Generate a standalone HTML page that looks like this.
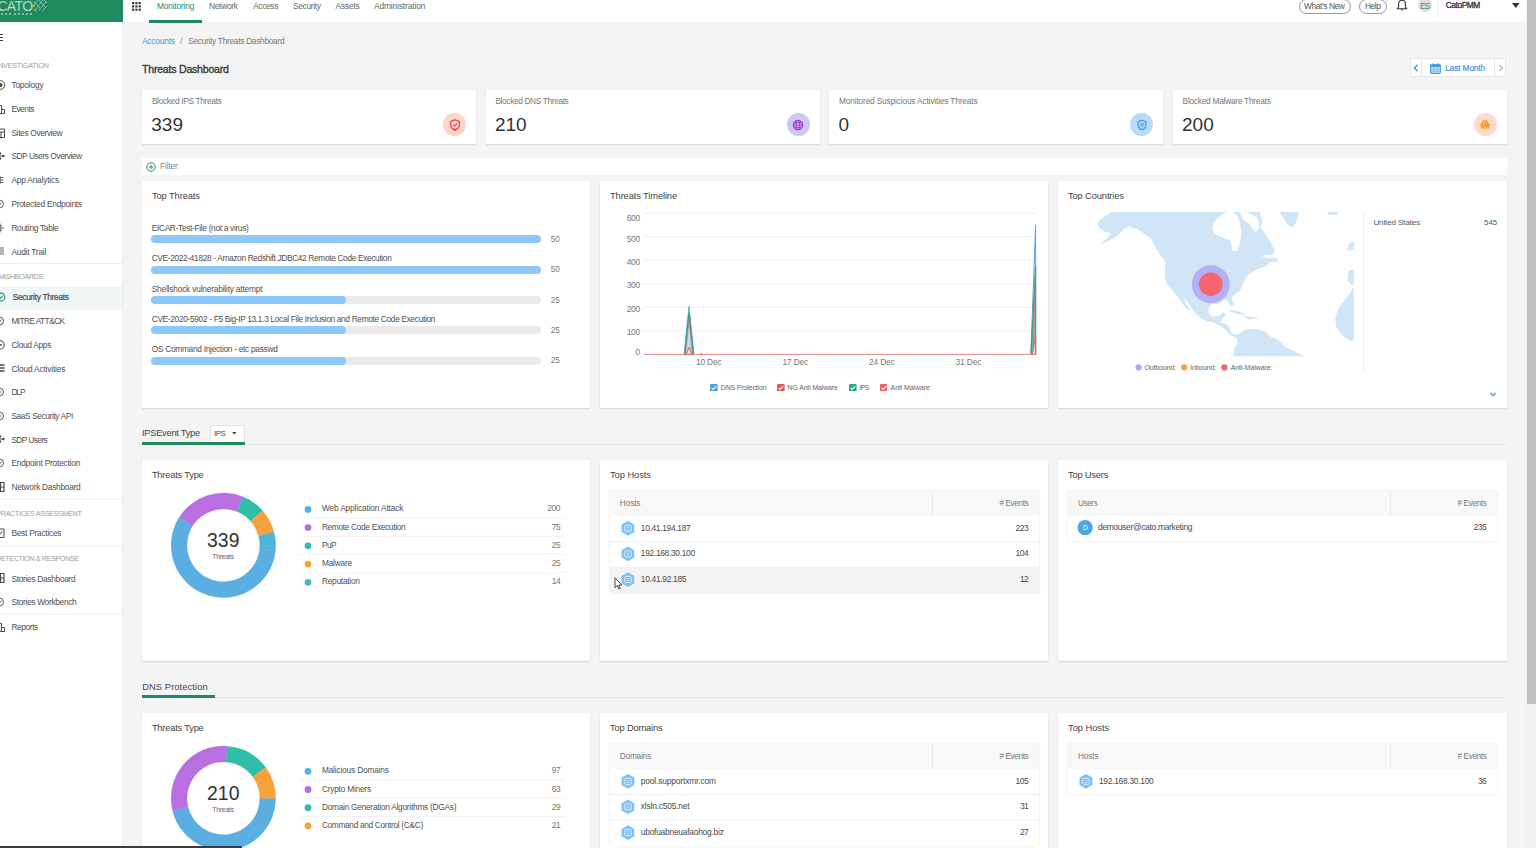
<!DOCTYPE html>
<html lang="en">
<head>
<meta charset="utf-8">
<title>Security Threats Dashboard</title>
<style>
*{box-sizing:border-box;margin:0;padding:0}
html,body{width:1536px;height:848px;overflow:hidden}
body{font-family:"Liberation Sans",sans-serif;background:#f4f4f4;position:relative;color:#555;font-size:9px}
.a{position:absolute;white-space:nowrap}
/* header */
#hdr{left:0;top:0;width:1526px;height:22px;background:#fff}
#logo{left:0;top:0;width:122.5px;height:22px;background:#1f8a5e;overflow:hidden}
.nav{top:0;height:12px;line-height:12px;font-size:8.4px;color:#6b6b6b;letter-spacing:-.025em}
/* sidebar */
#side{left:0;top:22px;width:123px;height:826px;background:#fff;border-right:1px solid #ececec}
.sh{left:-2px;font-size:6.7px;color:#a9a9a9;letter-spacing:-.01em;height:10px;line-height:10px}
.si{left:11.5px;font-size:8.4px;color:#4f4f4f;height:12px;line-height:12px;letter-spacing:-.025em}
.sep{left:0;width:122px;height:1px;background:#efefef}
.ic{left:-4px;width:11px;height:11px}
/* cards */
.card{background:#fff;box-shadow:0 1px 2px rgba(0,0,0,.14);border-radius:1px}
.ct{font-size:8px;letter-spacing:-.025em;color:#777;height:10px;line-height:10px}
.cn{font-size:19px;color:#333;height:20px;line-height:20px}
.pt{font-size:9.3px;letter-spacing:-.02em;color:#444;height:12px;line-height:12px}
.t8{font-size:8.2px;color:#555;height:10px;line-height:10px}
.r{text-align:right}
</style>
</head>
<body>
<!-- HEADER -->
<div id="hdr" class="a"></div>
<div id="logo" class="a"></div>
<div class="a" style="left:-2.6px;top:-2.2px;font-size:14px;line-height:17px;color:#eef7f3;letter-spacing:-.65px;-webkit-text-stroke:.35px #1f8a5e">CATO</div>
<svg class="a" style="left:32px;top:-3px" width="16" height="16" viewBox="0 0 16 16"><g stroke="#bfe0d1" stroke-width=".6" fill="none"><path d="M1 9 L7 2 M3 13 L11 3 M6 14 L14 5 M10 14 L15 9 M2 4 L8 11 M5 1 L13 10 M9 0 L15 6 M1 12 L5 15 M12 1 L15 3"/></g><circle cx="1.6" cy="9" r="1.2" fill="#f2a23a"/></svg>
<div class="a" style="left:1px;top:13.1px;width:31px;height:1.7px;background:repeating-linear-gradient(90deg,#7cc3a6 0 2px,transparent 2px 4.2px)"></div>
<svg class="a" style="left:131.5px;top:1.5px" width="9" height="9" viewBox="0 0 9 9"><g fill="#3a3a3a"><rect x="0.0" y="0.0" width="2.2" height="2.2"/><rect x="3.3" y="0.0" width="2.2" height="2.2"/><rect x="6.6" y="0.0" width="2.2" height="2.2"/><rect x="0.0" y="3.3" width="2.2" height="2.2"/><rect x="3.3" y="3.3" width="2.2" height="2.2"/><rect x="6.6" y="3.3" width="2.2" height="2.2"/><rect x="0.0" y="6.6" width="2.2" height="2.2"/><rect x="3.3" y="6.6" width="2.2" height="2.2"/><rect x="6.6" y="6.6" width="2.2" height="2.2"/></g></svg>
<div class="a" style="left:157.0px;top:-0.2px;height:12px;line-height:12px;font-size:8.4px;letter-spacing:-0.202px;color:#2d8a73;">Monitoring</div>
<div class="a" style="left:209.0px;top:-0.2px;height:12px;line-height:12px;font-size:8.4px;letter-spacing:-0.301px;color:#666;">Network</div>
<div class="a" style="left:253.0px;top:-0.2px;height:12px;line-height:12px;font-size:8.4px;letter-spacing:-0.315px;color:#666;">Access</div>
<div class="a" style="left:293.0px;top:-0.2px;height:12px;line-height:12px;font-size:8.4px;letter-spacing:-0.335px;color:#666;">Security</div>
<div class="a" style="left:335.6px;top:-0.2px;height:12px;line-height:12px;font-size:8.4px;letter-spacing:-0.202px;color:#666;">Assets</div>
<div class="a" style="left:374.0px;top:-0.2px;height:12px;line-height:12px;font-size:8.4px;letter-spacing:-0.132px;color:#666;">Administration</div>
<div class="a" style="left:149px;top:20px;width:53px;height:2.5px;background:#1f8a5e"></div>
<div class="a" style="left:1298.5px;width:52px;border:1px solid #979797;border-radius:8px;height:15px;top:-1.5px"></div>
<div class="a" style="left:1359px;width:27.5px;border:1px solid #979797;border-radius:8px;height:15px;top:-1.5px"></div>
<div class="a" style="left:1304.0px;top:-0.4px;height:12px;line-height:12px;font-size:8.4px;letter-spacing:-0.394px;color:#555;">What's New</div>
<div class="a" style="left:1365.0px;top:-0.4px;height:12px;line-height:12px;font-size:8.4px;letter-spacing:-0.425px;color:#555;">Help</div>
<svg class="a" style="left:1396px;top:-1px" width="12" height="13" viewBox="0 0 12 13"><path d="M6 1.2 C3.6 1.2 2.6 3 2.6 5.2 V8 L1.2 9.8 H10.8 L9.4 8 V5.2 C9.4 3 8.4 1.2 6 1.2 Z" fill="none" stroke="#333" stroke-width="1.1" stroke-linejoin="round"/><path d="M4.9 10.6 a1.1 1.1 0 0 0 2.2 0 Z" fill="#333"/><rect x="5.4" y="0" width="1.2" height="1.4" fill="#333"/></svg>
<div class="a" style="left:1418px;top:-2.5px;width:14px;height:14px;border-radius:7px;background:#dedede"></div>
<div class="a" style="left:1419.9px;top:-0.3px;height:12px;line-height:12px;font-size:8.3px;letter-spacing:-0.672px;color:#2d9a78;">ES</div>
<div class="a" style="left:1437px;top:0;width:1px;height:17px;background:#ececec"></div>
<div class="a" style="left:1445.7px;top:-0.6px;height:12px;line-height:12px;font-size:8.4px;letter-spacing:-0.432px;color:#333;-webkit-text-stroke:.3px #333;">CatoPMM</div>
<svg class="a" style="left:1511.5px;top:3.2px" width="7.5" height="5" viewBox="0 0 7.5 5"><path d="M0 0 H7.5 L3.75 5 Z" fill="#333"/></svg>

<!-- SIDEBAR -->
<div id="side" class="a">
<div class="a" style="left:-3.7px;top:38.7px;height:10px;line-height:10px;font-size:7.1px;letter-spacing:-0.151px;color:#9c9c9c;">INVESTIGATION</div>
<svg class="a" style="left:-6px;top:57.0px" width="12" height="12" viewBox="0 0 12 12" fill="none" stroke="#4a4a4a" stroke-width="1"><circle cx="6.5" cy="6" r="4.3"/><circle cx="6.5" cy="6" r="2" fill="#4a4a4a" stroke="none"/></svg>
<div class="a" style="left:11.4px;top:57.2px;height:12px;line-height:12px;font-size:8.35px;letter-spacing:-0.175px;color:#4f4f4f;">Topology</div>
<svg class="a" style="left:-6px;top:80.7px" width="12" height="12" viewBox="0 0 12 12" fill="none" stroke="#4a4a4a" stroke-width="1"><path d="M2 2.5 H7.5 V10.5 H2 Z M7.5 6.5 H10.5 V10.5 H7.5"/></svg>
<div class="a" style="left:11.4px;top:80.9px;height:12px;line-height:12px;font-size:8.35px;letter-spacing:-0.505px;color:#4f4f4f;">Events</div>
<svg class="a" style="left:-6px;top:104.8px" width="12" height="12" viewBox="0 0 12 12" fill="none" stroke="#4a4a4a" stroke-width="1"><path d="M1.5 2 H10.5 V10.5 H1.5 Z M1.5 5 H10.5 M7 5 V10.5"/></svg>
<div class="a" style="left:11.4px;top:105.0px;height:12px;line-height:12px;font-size:8.35px;letter-spacing:-0.337px;color:#4f4f4f;">Sites Overview</div>
<svg class="a" style="left:-6px;top:128.1px" width="12" height="12" viewBox="0 0 12 12" fill="none" stroke="#4a4a4a" stroke-width="1"><g fill="#4a4a4a" stroke="none"><circle cx="6" cy="3.5" r="1.2"/><circle cx="6" cy="8.5" r="1.2"/><circle cx="9.3" cy="6" r="1.3"/></g><path d="M3 6 H8"/></svg>
<div class="a" style="left:11.4px;top:128.3px;height:12px;line-height:12px;font-size:8.35px;letter-spacing:-0.445px;color:#4f4f4f;">SDP Users Overview</div>
<svg class="a" style="left:-6px;top:151.8px" width="12" height="12" viewBox="0 0 12 12" fill="none" stroke="#4a4a4a" stroke-width="1"><path d="M3 3.5 H9.5 M3 6 H9.5 M3 8.5 H9.5" stroke-width=".9"/><path d="M6.5 2.5 V9.5" stroke-width=".6"/></svg>
<div class="a" style="left:11.4px;top:152.0px;height:12px;line-height:12px;font-size:8.35px;letter-spacing:-0.198px;color:#4f4f4f;">App Analytics</div>
<svg class="a" style="left:-6px;top:175.9px" width="12" height="12" viewBox="0 0 12 12" fill="none" stroke="#4a4a4a" stroke-width="1"><circle cx="5.5" cy="6" r="4" stroke-width=".9"/><path d="M3.8 6 L5.2 7.4 L7.5 4.6" stroke-width=".9"/></svg>
<div class="a" style="left:11.4px;top:176.1px;height:12px;line-height:12px;font-size:8.35px;letter-spacing:-0.250px;color:#4f4f4f;">Protected Endpoints</div>
<svg class="a" style="left:-6px;top:199.6px" width="12" height="12" viewBox="0 0 12 12" fill="none" stroke="#4a4a4a" stroke-width="1"><path d="M6 1.5 V10.5 M2 6 H10 M4 3.8 H8 M4 8.2 H8" stroke-width=".9"/></svg>
<div class="a" style="left:11.4px;top:199.8px;height:12px;line-height:12px;font-size:8.35px;letter-spacing:-0.293px;color:#4f4f4f;">Routing Table</div>
<svg class="a" style="left:-6px;top:223.3px" width="12" height="12" viewBox="0 0 12 12" fill="none" stroke="#4a4a4a" stroke-width="1"><path d="M2 3 H10 M2 5 H10 M2 7 H10 M2 9 H10" stroke-width=".8"/></svg>
<div class="a" style="left:11.4px;top:223.5px;height:12px;line-height:12px;font-size:8.35px;letter-spacing:-0.213px;color:#4f4f4f;">Audit Trail</div>
<div class="a sep" style="top:240.8px"></div>
<div class="a" style="left:-3.7px;top:250.2px;height:10px;line-height:10px;font-size:7.1px;letter-spacing:-0.301px;color:#9c9c9c;">DASHBOARDS</div>
<div class="a" style="left:0;top:263.8px;width:122px;height:24.5px;background:#f1f6f7"></div>
<svg class="a" style="left:-6px;top:268.9px" width="12" height="12" viewBox="0 0 12 12" fill="none" stroke="#35a27c" stroke-width="1"><circle cx="6.8" cy="6" r="4" stroke-width="1.3"/><path d="M5 6 L6.4 7.4 L8.8 4.6" stroke-width="1.3"/></svg>
<div class="a" style="left:12.7px;top:269.1px;height:12px;line-height:12px;font-size:8.35px;letter-spacing:-0.289px;color:#4a4a4a;-webkit-text-stroke:.2px #4a4a4a;">Security Threats</div>
<svg class="a" style="left:-6px;top:293.0px" width="12" height="12" viewBox="0 0 12 12" fill="none" stroke="#4a4a4a" stroke-width="1"><circle cx="5.5" cy="6" r="4" stroke-width=".9"/><path d="M3.8 6 L5.2 7.4 L7.5 4.6" stroke-width=".9"/></svg>
<div class="a" style="left:11.4px;top:293.2px;height:12px;line-height:12px;font-size:8.35px;letter-spacing:-0.578px;color:#4f4f4f;">MITRE ATT&amp;CK</div>
<svg class="a" style="left:-6px;top:316.5px" width="12" height="12" viewBox="0 0 12 12" fill="none" stroke="#4a4a4a" stroke-width="1"><circle cx="6" cy="6" r="4.2" stroke-width="1.1"/><path d="M4 6 H8" stroke-width="1.6"/></svg>
<div class="a" style="left:11.4px;top:316.7px;height:12px;line-height:12px;font-size:8.35px;letter-spacing:-0.301px;color:#4f4f4f;">Cloud Apps</div>
<svg class="a" style="left:-6px;top:340.3px" width="12" height="12" viewBox="0 0 12 12" fill="none" stroke="#4a4a4a" stroke-width="1"><path d="M2 3 H10.5 M2 6 H10.5 M2 9 H10.5" stroke-width="1.3"/></svg>
<div class="a" style="left:11.4px;top:340.5px;height:12px;line-height:12px;font-size:8.35px;letter-spacing:-0.168px;color:#4f4f4f;">Cloud Activities</div>
<svg class="a" style="left:-6px;top:364.0px" width="12" height="12" viewBox="0 0 12 12" fill="none" stroke="#4a4a4a" stroke-width="1"><circle cx="5.5" cy="6" r="4" stroke-width=".9"/><path d="M3.5 5 H7.5 M3.5 7 H7.5" stroke-width=".7"/></svg>
<div class="a" style="left:11.4px;top:364.2px;height:12px;line-height:12px;font-size:8.35px;letter-spacing:-1.072px;color:#4f4f4f;">DLP</div>
<svg class="a" style="left:-6px;top:387.7px" width="12" height="12" viewBox="0 0 12 12" fill="none" stroke="#4a4a4a" stroke-width="1"><circle cx="5.5" cy="6" r="4" stroke-width=".9"/><path d="M3.5 5 H7.5 M3.5 7 H7.5" stroke-width=".7"/></svg>
<div class="a" style="left:11.4px;top:387.9px;height:12px;line-height:12px;font-size:8.35px;letter-spacing:-0.395px;color:#4f4f4f;">SaaS Security API</div>
<svg class="a" style="left:-6px;top:411.4px" width="12" height="12" viewBox="0 0 12 12" fill="none" stroke="#4a4a4a" stroke-width="1"><g fill="#4a4a4a" stroke="none"><circle cx="6" cy="3.5" r="1.2"/><circle cx="6" cy="8.5" r="1.2"/><circle cx="9.3" cy="6" r="1.3"/></g><path d="M3 6 H8"/></svg>
<div class="a" style="left:11.4px;top:411.6px;height:12px;line-height:12px;font-size:8.35px;letter-spacing:-0.593px;color:#4f4f4f;">SDP Users</div>
<svg class="a" style="left:-6px;top:435.1px" width="12" height="12" viewBox="0 0 12 12" fill="none" stroke="#4a4a4a" stroke-width="1"><circle cx="5.5" cy="6" r="4" stroke-width=".9"/><path d="M3.8 6 L5.2 7.4 L7.5 4.6" stroke-width=".9"/></svg>
<div class="a" style="left:11.4px;top:435.3px;height:12px;line-height:12px;font-size:8.35px;letter-spacing:-0.216px;color:#4f4f4f;">Endpoint Protection</div>
<svg class="a" style="left:-6px;top:458.8px" width="12" height="12" viewBox="0 0 12 12" fill="none" stroke="#4a4a4a" stroke-width="1"><path d="M2 1.5 H10 V10.5 H2 Z M2 6 H10 M6.5 1.5 V10.5" stroke-width="1.2"/></svg>
<div class="a" style="left:11.4px;top:459.0px;height:12px;line-height:12px;font-size:8.35px;letter-spacing:-0.281px;color:#4f4f4f;">Network Dashboard</div>
<div class="a sep" style="top:477.4px"></div>
<div class="a" style="left:-3.7px;top:486.5px;height:10px;line-height:10px;font-size:7.1px;letter-spacing:-0.265px;color:#9c9c9c;">PRACTICES ASSESSMENT</div>
<svg class="a" style="left:-6px;top:504.8px" width="12" height="12" viewBox="0 0 12 12" fill="none" stroke="#4a4a4a" stroke-width="1"><path d="M2 2 H10 V10.5 H2 Z"/><path d="M4 6.2 L5.6 7.8 L8.3 4.4"/></svg>
<div class="a" style="left:11.4px;top:505.0px;height:12px;line-height:12px;font-size:8.35px;letter-spacing:-0.244px;color:#4f4f4f;">Best Practices</div>
<div class="a sep" style="top:522.7px"></div>
<div class="a" style="left:-3.7px;top:532.1px;height:10px;line-height:10px;font-size:7.1px;letter-spacing:-0.329px;color:#9c9c9c;">DETECTION &amp; RESPONSE</div>
<svg class="a" style="left:-6px;top:550.4px" width="12" height="12" viewBox="0 0 12 12" fill="none" stroke="#4a4a4a" stroke-width="1"><path d="M2 1.5 H10 V10.5 H2 Z M2 6 H10 M6.5 1.5 V10.5" stroke-width="1.2"/></svg>
<div class="a" style="left:11.4px;top:550.6px;height:12px;line-height:12px;font-size:8.35px;letter-spacing:-0.297px;color:#4f4f4f;">Stories Dashboard</div>
<svg class="a" style="left:-6px;top:574.1px" width="12" height="12" viewBox="0 0 12 12" fill="none" stroke="#4a4a4a" stroke-width="1"><circle cx="5.5" cy="6" r="4" stroke-width=".9"/><path d="M3.8 6 L5.2 7.4 L7.5 4.6" stroke-width=".9"/></svg>
<div class="a" style="left:11.4px;top:574.3px;height:12px;line-height:12px;font-size:8.35px;letter-spacing:-0.312px;color:#4f4f4f;">Stories Workbench</div>
<div class="a sep" style="top:592.0px"></div>
<svg class="a" style="left:-6px;top:598.5px" width="12" height="12" viewBox="0 0 12 12" fill="none" stroke="#4a4a4a" stroke-width="1"><path d="M2 2.5 H7.5 V10.5 H2 Z M7.5 6.5 H10.5 V10.5 H7.5"/></svg>
<div class="a" style="left:11.4px;top:598.7px;height:12px;line-height:12px;font-size:8.35px;letter-spacing:-0.390px;color:#4f4f4f;">Reports</div>
<div class="a" style="left:0;top:11.5px;width:3px;height:7px;background:linear-gradient(#444 0 1.2px,transparent 1.2px 2.9px,#444 2.9px 4.1px,transparent 4.1px 5.8px,#444 5.8px 7px)"></div>

</div>
<!-- MAIN -->
<div id="main">
<div class="a" style="left:142.0px;top:34.9px;height:12px;line-height:12px;font-size:8.3px;letter-spacing:-0.163px;color:#3b95d8;">Accounts</div>
<div class="a" style="left:180.3px;top:34.9px;height:12px;line-height:12px;font-size:8.3px;color:#888;">/</div>
<div class="a" style="left:188.2px;top:34.9px;height:12px;line-height:12px;font-size:8.3px;letter-spacing:-0.271px;color:#777;">Security Threats Dashboard</div>
<div class="a" style="left:142.0px;top:62.0px;height:14px;line-height:14px;font-size:10.6px;letter-spacing:-0.234px;color:#333;-webkit-text-stroke:.3px #333;">Threats Dashboard</div>
<div class="a" style="left:1409.6px;top:58px;width:96.6px;height:19.4px;background:#fff;border:1px solid #e6e6e6;border-radius:1px"></div>
<div class="a" style="left:1421px;top:58px;width:1px;height:19.4px;background:#e6e6e6"></div>
<div class="a" style="left:1494.2px;top:58px;width:1px;height:19.4px;background:#e6e6e6"></div>
<svg class="a" style="left:1412.5px;top:64px" width="6" height="8" viewBox="0 0 6 8"><path d="M4.6 .8 L1.4 4 L4.6 7.2" fill="none" stroke="#3f97dc" stroke-width="1.3"/></svg>
<svg class="a" style="left:1497.5px;top:64px" width="6" height="8" viewBox="0 0 6 8"><path d="M1.4 .8 L4.6 4 L1.4 7.2" fill="none" stroke="#aaa" stroke-width="1.1"/></svg>
<svg class="a" style="left:1430px;top:62.5px" width="11" height="11" viewBox="0 0 11 11"><rect x=".6" y="1.6" width="9.8" height="8.8" rx="1.2" fill="#d9ecfb" stroke="#46a2e6" stroke-width="1.1"/><rect x=".6" y="1.6" width="9.8" height="2.6" fill="#46a2e6"/><path d="M3 .3 V2.4 M8 .3 V2.4" stroke="#46a2e6" stroke-width="1.2"/><path d="M3.9 4.5 V10 M7.1 4.5 V10 M1 6.3 H10 M1 8.3 H10" stroke="#46a2e6" stroke-width=".6"/></svg>
<div class="a" style="left:1445.2px;top:62.1px;height:12px;line-height:12px;font-size:8.3px;letter-spacing:-0.118px;color:#3f97dc;-webkit-text-stroke:.2px #3f97dc;">Last Month</div>
<div class="a card" style="left:142.0px;top:90px;width:334px;height:53.6px"></div>
<div class="a" style="left:151.9px;top:95.5px;height:10px;line-height:10px;font-size:8.3px;letter-spacing:-0.317px;color:#777;">Blocked IPS Threats</div>
<div class="a cn" style="left:151.3px;top:114.5px">339</div>
<div class="a" style="left:443.0px;top:113.2px;width:23px;height:23px;border-radius:12px;background:#fdd6c7"></div>
<svg class="a" style="left:448.5px;top:118.7px" width="12" height="12" viewBox="0 0 12 12" fill="none"><path d="M6 .8 L10.3 2.4 V6 C10.3 8.6 8.4 10.4 6 11.3 C3.6 10.4 1.7 8.6 1.7 6 V2.4 Z" stroke="#ee4455" stroke-width="1.3"/><path d="M4 5.6 L5.6 7.2 L8.2 4.2" stroke="#ee4455" stroke-width="1.2"/><path d="M3.6 9.6 H8.4 L6 11.3 Z" fill="#ee4455"/></svg>
<div class="a card" style="left:485.6px;top:90px;width:334px;height:53.6px"></div>
<div class="a" style="left:495.4px;top:95.5px;height:10px;line-height:10px;font-size:8.3px;letter-spacing:-0.347px;color:#777;">Blocked DNS Threats</div>
<div class="a cn" style="left:494.9px;top:114.5px">210</div>
<div class="a" style="left:786.5px;top:113.2px;width:23px;height:23px;border-radius:12px;background:#cbc8f3"></div>
<svg class="a" style="left:792.0px;top:118.7px" width="12" height="12" viewBox="0 0 12 12" fill="none"><circle cx="6" cy="6" r="4.6" stroke="#a233c8" stroke-width="1.3"/><ellipse cx="6" cy="6" rx="2" ry="4.6" stroke="#a233c8" stroke-width="1"/><path d="M1.4 6 H10.6 M2 3.7 H10 M2 8.3 H10" stroke="#a233c8" stroke-width=".9"/></svg>
<div class="a card" style="left:829.1px;top:90px;width:334px;height:53.6px"></div>
<div class="a" style="left:839.0px;top:95.5px;height:10px;line-height:10px;font-size:8.3px;letter-spacing:-0.148px;color:#777;">Monitored Suspicious Activities Threats</div>
<div class="a cn" style="left:838.4px;top:114.5px">0</div>
<div class="a" style="left:1130.1px;top:113.2px;width:23px;height:23px;border-radius:12px;background:#b9dbf8"></div>
<svg class="a" style="left:1135.6px;top:118.7px" width="12" height="12" viewBox="0 0 12 12" fill="none"><path d="M6 1.2 L10 2.6 V6 C10 8.4 8.2 10 6 10.8 C3.8 10 2 8.4 2 6 V2.6 Z" stroke="#3a96d8" stroke-width="1.1" fill="#a5d2f7"/><path d="M4.2 5 H7.8 M4.4 6.8 H7.6" stroke="#3a96d8" stroke-width=".8"/></svg>
<div class="a card" style="left:1172.7px;top:90px;width:334px;height:53.6px"></div>
<div class="a" style="left:1182.6px;top:95.5px;height:10px;line-height:10px;font-size:8.3px;letter-spacing:-0.238px;color:#777;">Blocked Malware Threats</div>
<div class="a cn" style="left:1182.0px;top:114.5px">200</div>
<div class="a" style="left:1473.7px;top:113.2px;width:23px;height:23px;border-radius:12px;background:#fddccb"></div>
<svg class="a" style="left:1479.2px;top:118.7px" width="12" height="12" viewBox="0 0 12 12" fill="none"><path d="M6 1.6 C8.3 1.6 9.6 3.2 9.6 5 H11.4 V6.6 H9.6 L10.6 9.6 H9 L8.2 7.6 V10.2 H6.8 V7.8 H5.2 V10.2 H3.8 V7.6 L3 9.6 H1.4 L2.4 6.6 H.6 V5 H2.4 C2.4 3.2 3.7 1.6 6 1.6 Z" fill="#f59a23"/><path d="M4 .8 L5 2 M8 .8 L7 2" stroke="#f59a23" stroke-width=".9"/><path d="M5.2 3.2 L6 4 L6.8 3.2" stroke="#fddccb" stroke-width=".8"/><circle cx="4.4" cy="5" r=".6" fill="#fddccb"/><circle cx="7.6" cy="5" r=".6" fill="#fddccb"/></svg>
<div class="a" style="left:142px;top:158.3px;width:1364.5px;height:17px;background:#fff"></div>
<svg class="a" style="left:145.5px;top:161.5px" width="10" height="10" viewBox="0 0 10 10"><circle cx="5" cy="5" r="4.2" fill="none" stroke="#2d8a6a" stroke-width="1"/><path d="M5 2.8 V7.2 M2.8 5 H7.2" stroke="#2d8a6a" stroke-width="1"/></svg>
<div class="a" style="left:160.1px;top:161.3px;height:11px;line-height:11px;font-size:8.6px;letter-spacing:-0.262px;color:#888;">Filter</div>

<div class="a card" style="left:141.8px;top:181px;width:448.6px;height:227px"></div>
<div class="a card" style="left:599.9px;top:181px;width:448.6px;height:227px"></div>
<div class="a card" style="left:1058.0px;top:181px;width:448.6px;height:227px"></div>
<div class="a" style="left:151.9px;top:190.0px;height:12px;line-height:12px;font-size:9.3px;letter-spacing:-0.084px;color:#444;">Top Threats</div>
<div class="a" style="left:151.7px;top:222.0px;height:12px;line-height:12px;font-size:8.35px;letter-spacing:-0.323px;color:#505050;">EICAR-Test-File (not a virus)</div>
<div class="a" style="left:151.4px;top:235.3px;width:389.2px;height:8.2px;border-radius:4.1px;background:#ebebeb"></div>
<div class="a" style="left:151.4px;top:235.3px;width:389.2px;height:8.2px;border-radius:4.1px;background:#8cc8fa"></div>
<div class="a" style="left:550.8px;top:234.0px;height:11px;line-height:11px;font-size:8.2px;color:#777;">50</div>
<div class="a" style="left:151.7px;top:252.3px;height:12px;line-height:12px;font-size:8.35px;letter-spacing:-0.350px;color:#505050;">CVE-2022-41828 - Amazon Redshift JDBC42 Remote Code Execution</div>
<div class="a" style="left:151.4px;top:265.6px;width:389.2px;height:8.2px;border-radius:4.1px;background:#ebebeb"></div>
<div class="a" style="left:151.4px;top:265.6px;width:389.2px;height:8.2px;border-radius:4.1px;background:#8cc8fa"></div>
<div class="a" style="left:550.8px;top:264.3px;height:11px;line-height:11px;font-size:8.2px;color:#777;">50</div>
<div class="a" style="left:151.7px;top:282.6px;height:12px;line-height:12px;font-size:8.35px;letter-spacing:-0.195px;color:#505050;">Shellshock vulnerability attempt</div>
<div class="a" style="left:151.4px;top:295.9px;width:389.2px;height:8.2px;border-radius:4.1px;background:#ebebeb"></div>
<div class="a" style="left:151.4px;top:295.9px;width:194.6px;height:8.2px;border-radius:4.1px;background:#8cc8fa"></div>
<div class="a" style="left:550.8px;top:294.6px;height:11px;line-height:11px;font-size:8.2px;color:#777;">25</div>
<div class="a" style="left:151.7px;top:312.9px;height:12px;line-height:12px;font-size:8.35px;letter-spacing:-0.332px;color:#505050;">CVE-2020-5902 - F5 Big-IP 13.1.3 Local File Inclusion and Remote Code Execution</div>
<div class="a" style="left:151.4px;top:326.2px;width:389.2px;height:8.2px;border-radius:4.1px;background:#ebebeb"></div>
<div class="a" style="left:151.4px;top:326.2px;width:194.6px;height:8.2px;border-radius:4.1px;background:#8cc8fa"></div>
<div class="a" style="left:550.8px;top:324.9px;height:11px;line-height:11px;font-size:8.2px;color:#777;">25</div>
<div class="a" style="left:151.7px;top:343.2px;height:12px;line-height:12px;font-size:8.35px;letter-spacing:-0.289px;color:#505050;">OS Command Injection - etc passwd</div>
<div class="a" style="left:151.4px;top:356.5px;width:389.2px;height:8.2px;border-radius:4.1px;background:#ebebeb"></div>
<div class="a" style="left:151.4px;top:356.5px;width:194.6px;height:8.2px;border-radius:4.1px;background:#8cc8fa"></div>
<div class="a" style="left:550.8px;top:355.2px;height:11px;line-height:11px;font-size:8.2px;color:#777;">25</div>
<div class="a" style="left:610.0px;top:190.0px;height:12px;line-height:12px;font-size:9.3px;letter-spacing:-0.109px;color:#444;">Threats Timeline</div>
<svg class="a" style="left:600px;top:181px" width="448" height="227" viewBox="600 181 448 227"><path d="M643.8 354.4 H1035.8" stroke="#eeeeee" stroke-width="1"/><path d="M643.8 330.8 H1035.8" stroke="#eeeeee" stroke-width="1"/><path d="M643.8 307.3 H1035.8" stroke="#eeeeee" stroke-width="1"/><path d="M643.8 283.8 H1035.8" stroke="#eeeeee" stroke-width="1"/><path d="M643.8 260.2 H1035.8" stroke="#eeeeee" stroke-width="1"/><path d="M643.8 236.6 H1035.8" stroke="#eeeeee" stroke-width="1"/><path d="M643.8 213.1 H1035.8" stroke="#eeeeee" stroke-width="1"/><path d="M684.1 354.4 L689.0 306.4 L693.9 354.4 Z" fill="#cfe6f6" fill-opacity="1" stroke="#5ba4dc" stroke-width="0.9" stroke-linejoin="round"/><path d="M684.7 354.4 L689.0 313.0 L693.3 354.4 Z" fill="#bfe0ee" fill-opacity="1" stroke="#3c9f86" stroke-width="1.5" stroke-linejoin="round"/><path d="M686.0 354.4 L689.0 319.1 L692.0 354.4 Z" fill="none" fill-opacity="0.0" stroke="#e0606a" stroke-width="0.5" stroke-linejoin="round"/><path d="M686.2 354.4 L689.0 347.3 L691.8 354.4 Z" fill="#fbd9cc" fill-opacity="1" stroke="#ee5555" stroke-width="0.9" stroke-linejoin="round"/><path d="M699.5 354.4 L701 352.79999999999995 L702.5 354.4 Z" fill="#bbb" stroke="#999" stroke-width=".5"/><path d="M1030.8 354.4 L1035.6 225.3 L1035.6 354.4 Z" fill="#cfe6f6" fill-opacity="1" stroke="#5ba4dc" stroke-width="1" stroke-linejoin="round"/><path d="M1031.0 354.4 L1035.6 266.8 L1035.6 354.4 Z" fill="#6fbba6" fill-opacity="1" stroke="#3c9f86" stroke-width="1.2" stroke-linejoin="round"/><path d="M1033.4 354.4 L1035.6 273.2 L1035.6 354.4 Z" fill="#f0a0a4" fill-opacity="0.35" stroke="#e0606a" stroke-width="0.6" stroke-linejoin="round"/><path d="M1032.2 354.4 L1035.6 337.4 L1035.6 354.4 Z" fill="#fbd9cc" fill-opacity="1" stroke="#ee5555" stroke-width="0.9" stroke-linejoin="round"/><path d="M643.8 354.4 H1035.8" stroke="#e58890" stroke-width="1"/></svg>
<div class="a" style="left:626.7px;top:212.6px;height:11px;line-height:11px;font-size:8.4px;letter-spacing:-0.308px;color:#777;">600</div>
<div class="a" style="left:626.7px;top:233.6px;height:11px;line-height:11px;font-size:8.4px;letter-spacing:-0.308px;color:#777;">500</div>
<div class="a" style="left:626.7px;top:257.0px;height:11px;line-height:11px;font-size:8.4px;letter-spacing:-0.308px;color:#777;">400</div>
<div class="a" style="left:626.7px;top:280.3px;height:11px;line-height:11px;font-size:8.4px;letter-spacing:-0.308px;color:#777;">300</div>
<div class="a" style="left:626.7px;top:303.7px;height:11px;line-height:11px;font-size:8.4px;letter-spacing:-0.308px;color:#777;">200</div>
<div class="a" style="left:626.7px;top:327.0px;height:11px;line-height:11px;font-size:8.4px;letter-spacing:-0.308px;color:#777;">100</div>
<div class="a" style="left:635.6px;top:346.7px;height:11px;line-height:11px;font-size:8.4px;color:#777;">0</div>
<div class="a" style="left:695.9px;top:357.3px;height:11px;line-height:11px;font-size:8.4px;letter-spacing:-0.163px;color:#777;">10 Dec</div>
<div class="a" style="left:782.5px;top:357.3px;height:11px;line-height:11px;font-size:8.4px;letter-spacing:-0.163px;color:#777;">17 Dec</div>
<div class="a" style="left:869.0px;top:357.3px;height:11px;line-height:11px;font-size:8.4px;letter-spacing:-0.163px;color:#777;">24 Dec</div>
<div class="a" style="left:955.6px;top:357.3px;height:11px;line-height:11px;font-size:8.4px;letter-spacing:-0.163px;color:#777;">31 Dec</div>
<svg class="a" style="left:710.3px;top:383.8px" width="7.6" height="7.6" viewBox="0 0 8 8"><rect width="8" height="8" rx="1" fill="#4f9fe0"/><path d="M1.6 4.2 L3.3 5.9 L6.5 2.2" stroke="#fff" stroke-width="1.1" fill="none"/></svg>
<div class="a" style="left:720.8px;top:382.7px;height:10px;line-height:10px;font-size:6.9px;letter-spacing:-0.135px;color:#666;">DNS Protection</div>
<svg class="a" style="left:777.0px;top:383.8px" width="7.6" height="7.6" viewBox="0 0 8 8"><rect width="8" height="8" rx="1" fill="#ef5350"/><path d="M1.6 4.2 L3.3 5.9 L6.5 2.2" stroke="#fff" stroke-width="1.1" fill="none"/></svg>
<div class="a" style="left:787.6px;top:382.7px;height:10px;line-height:10px;font-size:6.9px;letter-spacing:-0.105px;color:#666;">NG Anti Malware</div>
<svg class="a" style="left:849.0px;top:383.8px" width="7.6" height="7.6" viewBox="0 0 8 8"><rect width="8" height="8" rx="1" fill="#2aa58a"/><path d="M1.6 4.2 L3.3 5.9 L6.5 2.2" stroke="#fff" stroke-width="1.1" fill="none"/></svg>
<div class="a" style="left:859.2px;top:382.7px;height:10px;line-height:10px;font-size:6.9px;letter-spacing:-0.461px;color:#666;">IPS</div>
<svg class="a" style="left:879.8px;top:383.8px" width="7.6" height="7.6" viewBox="0 0 8 8"><rect width="8" height="8" rx="1" fill="#f0626a"/><path d="M1.6 4.2 L3.3 5.9 L6.5 2.2" stroke="#fff" stroke-width="1.1" fill="none"/></svg>
<div class="a" style="left:890.6px;top:382.7px;height:10px;line-height:10px;font-size:6.9px;letter-spacing:-0.062px;color:#666;">Anti Malware</div>
<div class="a" style="left:1068.0px;top:190.2px;height:12px;line-height:12px;font-size:9.3px;letter-spacing:-0.115px;color:#444;">Top Countries</div>
<svg class="a" style="left:1058px;top:181px" width="448" height="227" viewBox="1058 181 448 227"><polygon points="1098.9,221.0 1105.5,215.9 1113.0,212.0 1259.2,212.0 1262.1,220.1 1260.2,227.6 1265.8,235.2 1270.6,242.7 1274.3,250.3 1272.5,254.4 1265.8,254.4 1261.1,256.9 1268.7,258.8 1276.2,257.8 1278.1,261.6 1270.6,261.6 1265.8,265.4 1259.2,268.2 1249.8,272.9 1246.0,276.7 1242.3,284.2 1240.4,289.9 1234.7,294.6 1230.9,297.5 1233.8,305.0 1230.9,305.9 1227.2,299.3 1223.4,299.3 1220.6,303.1 1212.1,303.5 1208.3,306.9 1208.3,313.5 1212.1,317.3 1219.6,316.3 1222.5,312.5 1225.3,314.4 1221.5,320.1 1219.6,322.9 1225.3,323.9 1229.1,327.6 1230.9,333.3 1236.6,335.2 1238.5,333.3 1240.4,335.2 1234.7,337.1 1229.1,333.3 1223.4,327.6 1215.8,322.9 1208.3,321.0 1200.8,318.2 1195.1,312.5 1190.4,305.9 1185.7,299.3 1181.9,295.6 1185.7,303.1 1189.4,309.7 1185.7,307.8 1180.0,299.3 1174.3,291.8 1168.7,286.1 1165.8,280.5 1164.9,271.0 1165.8,261.6 1161.1,255.9 1155.5,246.5 1151.7,239.0 1144.2,233.3 1136.6,228.6 1129.1,225.8 1123.4,229.5 1117.7,235.2 1108.3,240.8 1100.8,243.7 1106.4,239.0 1112.1,233.3 1104.5,231.4 1098.9,226.7 1097.9,223.9" fill="#d0e6f6" stroke="#d0e6f6" stroke-width=".8" stroke-linejoin="round"/><polygon points="1236.6,337.1 1240.4,333.3 1246.0,329.5 1255.5,329.5 1264.9,331.4 1270.6,337.1 1278.1,339.9 1283.8,346.5 1293.2,351.2 1303.6,355.9 1233.8,355.9 1234.7,348.4 1238.5,342.7" fill="#d0e6f6" stroke="#d0e6f6" stroke-width=".8" stroke-linejoin="round"/><polygon points="1353.6,288.0 1349.8,293.7 1344.2,301.2 1338.5,308.8 1335.7,318.2 1336.6,327.6 1344.2,337.1 1351.7,340.8 1353.6,339.9" fill="#d0e6f6" stroke="#d0e6f6" stroke-width=".8" stroke-linejoin="round"/><polygon points="1353.6,241.8 1348.9,243.7 1347.5,250.3 1353.6,249.3" fill="#d0e6f6" stroke="#d0e6f6" stroke-width=".8" stroke-linejoin="round"/><polygon points="1353.6,270.1 1348.9,271.0 1347.9,280.5 1351.7,284.2 1353.6,284.2" fill="#d0e6f6" stroke="#d0e6f6" stroke-width=".8" stroke-linejoin="round"/><polygon points="1280.0,212.0 1298.9,212.0 1295.1,223.9 1292.3,227.3 1287.5,223.9 1283.8,218.2" fill="#d0e6f6" stroke="#d0e6f6" stroke-width=".8" stroke-linejoin="round"/><polygon points="1327.2,212.0 1338.5,212.0 1336.6,214.4 1329.1,214.4" fill="#d0e6f6" stroke="#d0e6f6" stroke-width=".8" stroke-linejoin="round"/><polygon points="1229.1,310.3 1238.5,311.6 1245.1,314.8 1236.6,313.7" fill="#d0e6f6" stroke="#d0e6f6" stroke-width=".8" stroke-linejoin="round"/><polygon points="1244.2,316.7 1257.4,317.8 1249.8,319.0" fill="#d0e6f6" stroke="#d0e6f6" stroke-width=".8" stroke-linejoin="round"/><polygon points="1226.2,212.5 1218.7,217.3 1214.0,222.9 1212.6,228.6 1214.9,233.7 1223.4,237.5 1230.9,240.5 1232.8,249.9 1237.0,251.0 1239.8,241.8 1240.8,233.3 1239.8,223.9 1237.5,216.7 1233.2,212.5" fill="#fff" stroke="#fff" stroke-width=".8" stroke-linejoin="round"/><polygon points="1246.0,212.0 1257.4,218.2 1259.2,227.6 1255.5,231.8 1249.8,223.9 1243.2,219.7 1240.4,212.0" fill="#fff" stroke="#fff" stroke-width=".8" stroke-linejoin="round"/><rect x="1058" y="200" width="300" height="12" fill="#fff"/><circle cx="1210.8" cy="284.2" r="19" fill="#b3b0f6"/><circle cx="1210.8" cy="284.2" r="11.8" fill="#f6656e"/><path d="M1363.6 212 V372.8" stroke="#ececec" stroke-width="1"/><circle cx="1138.6" cy="367.4" r="3.1" fill="#b0a8f5"/><circle cx="1184.2" cy="367.4" r="3.1" fill="#f5a04a"/><circle cx="1224.4" cy="367.4" r="3.1" fill="#f4636b"/><path d="M1490.5 393 L1493 395.6 L1495.5 393" fill="none" stroke="#3b95d8" stroke-width="1.3"/></svg>
<div class="a" style="left:1144.6px;top:362.5px;height:10px;line-height:10px;font-size:7px;letter-spacing:-0.174px;color:#666;">Outbound:</div>
<div class="a" style="left:1190.2px;top:362.5px;height:10px;line-height:10px;font-size:7px;letter-spacing:-0.193px;color:#666;">Inbound:</div>
<div class="a" style="left:1230.7px;top:362.5px;height:10px;line-height:10px;font-size:7px;letter-spacing:-0.082px;color:#666;">Anti-Malware:</div>
<div class="a" style="left:1373.4px;top:217.3px;height:11px;line-height:11px;font-size:8px;letter-spacing:-0.102px;color:#555;">United States</div>
<div class="a" style="left:1484.0px;top:217.3px;height:11px;line-height:11px;font-size:8px;letter-spacing:-0.074px;color:#555;">545</div>

<div class="a" style="left:142px;top:444px;width:1364.5px;height:1px;background:#e6e6e6"></div>
<div class="a" style="left:142.0px;top:427.1px;height:12px;line-height:12px;font-size:9.3px;letter-spacing:-0.271px;color:#444;">IPSEvent Type</div>
<div class="a" style="left:210.3px;top:424.5px;width:34.4px;height:18px;background:#fff;border:1px solid #e4e4e4"></div>
<div class="a" style="left:213.9px;top:428.1px;height:11px;line-height:11px;font-size:7.9px;letter-spacing:-0.417px;color:#4a4a4a;">IPS</div>
<svg class="a" style="left:232.2px;top:432.3px" width="4.6" height="2.6" viewBox="0 0 4.6 2.6"><path d="M0 0 H4.6 L2.3 2.6 Z" fill="#444"/></svg>
<div class="a" style="left:142px;top:442.1px;width:102.7px;height:2.9px;background:#1f8a5e"></div>
<div class="a card" style="left:141.8px;top:459.9px;width:448.6px;height:201.6px"></div>
<div class="a card" style="left:599.9px;top:459.9px;width:448.6px;height:201.6px"></div>
<div class="a card" style="left:1058.0px;top:459.9px;width:448.6px;height:201.6px"></div>
<div class="a" style="left:151.9px;top:468.7px;height:12px;line-height:12px;font-size:9.3px;letter-spacing:-0.201px;color:#444;">Threats Type</div>
<svg class="a" style="left:141.8px;top:459.9px" width="448.6" height="201.6" viewBox="141.8 459.9 448.6 201.6"><path d="M275.50 545.20 A52.3 52.3 0 1 1 179.04 517.18 L192.46 525.70 A36.4 36.4 0 1 0 259.60 545.20 Z" fill="#5baee1" stroke="#5baee1" stroke-width=".3"/><path d="M179.04 517.18 A52.3 52.3 0 0 1 242.82 496.72 L236.86 511.46 A36.4 36.4 0 0 0 192.46 525.70 Z" fill="#b96fe1" stroke="#b96fe1" stroke-width=".3"/><path d="M242.82 496.72 A52.3 52.3 0 0 1 262.42 510.60 L250.50 521.12 A36.4 36.4 0 0 0 236.86 511.46 Z" fill="#2fbfa9" stroke="#2fbfa9" stroke-width=".3"/><path d="M262.42 510.60 A52.3 52.3 0 0 1 273.75 531.78 L258.38 535.86 A36.4 36.4 0 0 0 250.50 521.12 Z" fill="#f7a13d" stroke="#f7a13d" stroke-width=".3"/><path d="M273.75 531.78 A52.3 52.3 0 0 1 275.50 545.20 L259.60 545.20 A36.4 36.4 0 0 0 258.38 535.86 Z" fill="#4db4d3" stroke="#4db4d3" stroke-width=".3"/><circle cx="307.8" cy="509.3" r="3.4" fill="#5baee1"/><path d="M300.3 518.0 H564.4" stroke="#f1f1f1" stroke-width="1"/><circle cx="307.8" cy="527.5" r="3.4" fill="#b96fe1"/><path d="M300.3 536.2 H564.4" stroke="#f1f1f1" stroke-width="1"/><circle cx="307.8" cy="545.7" r="3.4" fill="#2fbfa9"/><path d="M300.3 554.4 H564.4" stroke="#f1f1f1" stroke-width="1"/><circle cx="307.8" cy="564.0" r="3.4" fill="#f7a13d"/><path d="M300.3 572.7 H564.4" stroke="#f1f1f1" stroke-width="1"/><circle cx="307.8" cy="582.2" r="3.4" fill="#4db4d3"/></svg>
<div class="a" style="left:206.9px;top:530.3px;height:20px;line-height:20px;font-size:19.4px;letter-spacing:0.116px;color:#333;">339</div>
<div class="a" style="left:212.2px;top:551.7px;height:10px;line-height:10px;font-size:6.8px;letter-spacing:-0.192px;color:#666;">Threats</div>
<div class="a" style="left:321.9px;top:503.4px;height:11px;line-height:11px;font-size:8.3px;letter-spacing:-0.128px;color:#505050;">Web Application Attack</div>
<div class="a" style="left:547.2px;top:503.4px;height:11px;line-height:11px;font-size:8.4px;letter-spacing:-0.333px;color:#777;">200</div>
<div class="a" style="left:321.9px;top:521.6px;height:11px;line-height:11px;font-size:8.3px;letter-spacing:-0.311px;color:#505050;">Remote Code Execution</div>
<div class="a" style="left:551.7px;top:521.6px;height:11px;line-height:11px;font-size:8.4px;letter-spacing:-0.443px;color:#777;">75</div>
<div class="a" style="left:321.9px;top:539.8px;height:11px;line-height:11px;font-size:8.3px;letter-spacing:-0.494px;color:#505050;">PuP</div>
<div class="a" style="left:551.7px;top:539.8px;height:11px;line-height:11px;font-size:8.4px;letter-spacing:-0.443px;color:#777;">25</div>
<div class="a" style="left:321.9px;top:558.1px;height:11px;line-height:11px;font-size:8.3px;letter-spacing:-0.177px;color:#505050;">Malware</div>
<div class="a" style="left:551.7px;top:558.1px;height:11px;line-height:11px;font-size:8.4px;letter-spacing:-0.443px;color:#777;">25</div>
<div class="a" style="left:321.9px;top:576.3px;height:11px;line-height:11px;font-size:8.3px;letter-spacing:-0.227px;color:#505050;">Reputation</div>
<div class="a" style="left:551.7px;top:576.3px;height:11px;line-height:11px;font-size:8.4px;letter-spacing:-0.443px;color:#777;">14</div>
<div class="a" style="left:610.0px;top:468.7px;height:12px;line-height:12px;font-size:9.3px;letter-spacing:-0.044px;color:#444;">Top Hosts</div>
<div class="a" style="left:610.0px;top:491.4px;width:428.8px;height:101.3px;background:#fff;box-shadow:0 0 2px rgba(0,0,0,.14)"></div>
<div class="a" style="left:610.0px;top:491.4px;width:428.8px;height:24.4px;background:#f8f8f8"></div>
<div class="a" style="left:931.6px;top:491.4px;width:1px;height:24.4px;background:#e9e9e9"></div>
<div class="a" style="left:619.8px;top:497.9px;height:11px;line-height:11px;font-size:8.2px;letter-spacing:-0.065px;color:#777;">Hosts</div>
<div class="a" style="left:999.4px;top:497.9px;height:11px;line-height:11px;font-size:8.2px;letter-spacing:-0.372px;color:#777;"># Events</div>
<svg class="a" style="left:610.0px;top:515.8px" width="428.8" height="77.9" viewBox="610.0 515.8 428.8 77.9"><polygon points="627.9,535.5 621.5,531.8 621.5,524.4 627.9,520.7 634.3,524.4 634.3,531.8" fill="#7fc2f6"/><rect x="624.7" y="525.1" width="6.4" height="6" rx=".8" fill="#7ab9ee" stroke="#e6f3fd" stroke-width=".9"/><path d="M626.3 527.2 h3.2 M626.3 529.1 h3.2" stroke="#eaf5fd" stroke-width=".7"/><path d="M610.0 541.4 h428.8" stroke="#eeeeee" stroke-width="1"/><polygon points="627.9,561.1 621.5,557.4 621.5,550.0 627.9,546.3 634.3,550.0 634.3,557.4" fill="#7fc2f6"/><rect x="624.7" y="550.7" width="6.4" height="6" rx=".8" fill="#7ab9ee" stroke="#e6f3fd" stroke-width=".9"/><path d="M626.3 552.8 h3.2 M626.3 554.7 h3.2" stroke="#eaf5fd" stroke-width=".7"/><rect x="610.0" y="567.6" width="428.8" height="25.45" fill="#f3f3f3"/><path d="M610.0 567.1 h428.8" stroke="#eeeeee" stroke-width="1"/><polygon points="627.9,586.8 621.5,583.1 621.5,575.7 627.9,572.0 634.3,575.7 634.3,583.1" fill="#7fc2f6"/><rect x="624.7" y="576.4" width="6.4" height="6" rx=".8" fill="#7ab9ee" stroke="#e6f3fd" stroke-width=".9"/><path d="M626.3 578.5 h3.2 M626.3 580.4 h3.2" stroke="#eaf5fd" stroke-width=".7"/></svg>
<div class="a" style="left:640.8px;top:522.6px;height:11px;line-height:11px;font-size:8.4px;letter-spacing:-0.310px;color:#4a4a4a;">10.41.194.187</div>
<div class="a" style="left:1015.5px;top:522.6px;height:11px;line-height:11px;font-size:8.5px;letter-spacing:-0.491px;color:#4a4a4a;">223</div>
<div class="a" style="left:640.8px;top:548.2px;height:11px;line-height:11px;font-size:8.4px;letter-spacing:-0.299px;color:#4a4a4a;">192.168.30.100</div>
<div class="a" style="left:1015.5px;top:548.2px;height:11px;line-height:11px;font-size:8.5px;letter-spacing:-0.491px;color:#4a4a4a;">104</div>
<div class="a" style="left:640.8px;top:573.9px;height:11px;line-height:11px;font-size:8.4px;letter-spacing:-0.295px;color:#4a4a4a;">10.41.92.185</div>
<div class="a" style="left:1019.9px;top:573.9px;height:11px;line-height:11px;font-size:8.5px;letter-spacing:-0.655px;color:#4a4a4a;">12</div>
<div class="a" style="left:1068.1px;top:468.7px;height:12px;line-height:12px;font-size:9.3px;letter-spacing:-0.208px;color:#444;">Top Users</div>
<div class="a" style="left:1068.1px;top:491.4px;width:428.8px;height:50.0px;background:#fff;box-shadow:0 0 2px rgba(0,0,0,.14)"></div>
<div class="a" style="left:1068.1px;top:491.4px;width:428.8px;height:24.4px;background:#f8f8f8"></div>
<div class="a" style="left:1389.7px;top:491.4px;width:1px;height:24.4px;background:#e9e9e9"></div>
<div class="a" style="left:1077.9px;top:497.9px;height:11px;line-height:11px;font-size:8.2px;letter-spacing:-0.378px;color:#777;">Users</div>
<div class="a" style="left:1457.5px;top:497.9px;height:11px;line-height:11px;font-size:8.2px;letter-spacing:-0.372px;color:#777;"># Events</div>
<svg class="a" style="left:1068.1px;top:515.8px" width="428.8" height="26.6" viewBox="1068.1 515.8 428.8 26.6"><circle cx="1085.2" cy="527.5" r="7.6" fill="#4fa7e2"/></svg>
<div class="a" style="left:1097.9px;top:521.9px;height:11px;line-height:11px;font-size:8.4px;letter-spacing:-0.276px;color:#4a4a4a;">demouser@cato.marketing</div>
<div class="a" style="left:1082.9px;top:522.6px;height:10px;line-height:10px;font-size:6.5px;color:#fff;">D</div>
<div class="a" style="left:1473.6px;top:521.9px;height:11px;line-height:11px;font-size:8.5px;letter-spacing:-0.491px;color:#4a4a4a;">235</div>
<svg class="a" style="left:613.5px;top:577px" width="9" height="13" viewBox="0 0 9 13"><path d="M1 .8 V10.6 L3.3 8.5 L4.9 12 L6.3 11.4 L4.8 8 H7.8 Z" fill="#fff" stroke="#333" stroke-width=".9" stroke-linejoin="round"/></svg>

<div class="a" style="left:142px;top:697px;width:1364.5px;height:1px;background:#e6e6e6"></div>
<div class="a" style="left:142.2px;top:681.0px;height:12px;line-height:12px;font-size:9.3px;letter-spacing:0.108px;color:#444;">DNS Protection</div>
<div class="a" style="left:142px;top:695.3px;width:72.5px;height:2.4px;background:#1f8a5e"></div>
<div class="a card" style="left:141.8px;top:712.9px;width:448.6px;height:140px"></div>
<div class="a card" style="left:599.9px;top:712.9px;width:448.6px;height:140px"></div>
<div class="a card" style="left:1058.0px;top:712.9px;width:448.6px;height:140px"></div>
<div class="a" style="left:151.9px;top:721.7px;height:12px;line-height:12px;font-size:9.3px;letter-spacing:-0.201px;color:#444;">Threats Type</div>
<svg class="a" style="left:141.8px;top:712.9px" width="448.6" height="140" viewBox="141.8 712.9 448.6 140"><path d="M275.50 798.20 A52.3 52.3 0 0 1 172.39 810.60 L187.84 806.83 A36.4 36.4 0 0 0 259.60 798.20 Z" fill="#5baee1" stroke="#5baee1" stroke-width=".3"/><path d="M172.39 810.60 A52.3 52.3 0 0 1 227.11 746.05 L225.92 761.90 A36.4 36.4 0 0 0 187.84 806.83 Z" fill="#b96fe1" stroke="#b96fe1" stroke-width=".3"/><path d="M227.11 746.05 A52.3 52.3 0 0 1 265.51 767.46 L252.65 776.80 A36.4 36.4 0 0 0 225.92 761.90 Z" fill="#2fbfa9" stroke="#2fbfa9" stroke-width=".3"/><path d="M265.51 767.46 A52.3 52.3 0 0 1 275.50 798.20 L259.60 798.20 A36.4 36.4 0 0 0 252.65 776.80 Z" fill="#f7a13d" stroke="#f7a13d" stroke-width=".3"/><circle cx="307.8" cy="771.2" r="3.4" fill="#5baee1"/><path d="M300.3 779.9 H564.4" stroke="#f1f1f1" stroke-width="1"/><circle cx="307.8" cy="789.4" r="3.4" fill="#b96fe1"/><path d="M300.3 798.1 H564.4" stroke="#f1f1f1" stroke-width="1"/><circle cx="307.8" cy="807.6" r="3.4" fill="#2fbfa9"/><path d="M300.3 816.3 H564.4" stroke="#f1f1f1" stroke-width="1"/><circle cx="307.8" cy="825.9" r="3.4" fill="#f7a13d"/></svg>
<div class="a" style="left:206.9px;top:783.3px;height:20px;line-height:20px;font-size:19.4px;letter-spacing:0.116px;color:#333;">210</div>
<div class="a" style="left:212.2px;top:804.7px;height:10px;line-height:10px;font-size:6.8px;letter-spacing:-0.192px;color:#666;">Threats</div>
<div class="a" style="left:321.9px;top:765.3px;height:11px;line-height:11px;font-size:8.3px;letter-spacing:-0.159px;color:#505050;">Malicious Domains</div>
<div class="a" style="left:551.7px;top:765.3px;height:11px;line-height:11px;font-size:8.4px;letter-spacing:-0.443px;color:#777;">97</div>
<div class="a" style="left:321.9px;top:783.5px;height:11px;line-height:11px;font-size:8.3px;letter-spacing:-0.205px;color:#505050;">Crypto Miners</div>
<div class="a" style="left:551.7px;top:783.5px;height:11px;line-height:11px;font-size:8.4px;letter-spacing:-0.443px;color:#777;">63</div>
<div class="a" style="left:321.9px;top:801.7px;height:11px;line-height:11px;font-size:8.3px;letter-spacing:-0.247px;color:#505050;">Domain Generation Algorithms (DGAs)</div>
<div class="a" style="left:551.7px;top:801.7px;height:11px;line-height:11px;font-size:8.4px;letter-spacing:-0.443px;color:#777;">29</div>
<div class="a" style="left:321.9px;top:820.0px;height:11px;line-height:11px;font-size:8.3px;letter-spacing:-0.315px;color:#505050;">Command and Control (C&amp;C)</div>
<div class="a" style="left:551.7px;top:820.0px;height:11px;line-height:11px;font-size:8.4px;letter-spacing:-0.443px;color:#777;">21</div>
<div class="a" style="left:610.0px;top:721.7px;height:12px;line-height:12px;font-size:9.3px;letter-spacing:-0.157px;color:#444;">Top Domains</div>
<div class="a" style="left:610.0px;top:744.4px;width:428.8px;height:101.3px;background:#fff;box-shadow:0 0 2px rgba(0,0,0,.14)"></div>
<div class="a" style="left:610.0px;top:744.4px;width:428.8px;height:24.4px;background:#f8f8f8"></div>
<div class="a" style="left:931.6px;top:744.4px;width:1px;height:24.4px;background:#e9e9e9"></div>
<div class="a" style="left:619.8px;top:750.9px;height:11px;line-height:11px;font-size:8.2px;letter-spacing:-0.184px;color:#777;">Domains</div>
<div class="a" style="left:999.4px;top:750.9px;height:11px;line-height:11px;font-size:8.2px;letter-spacing:-0.372px;color:#777;"># Events</div>
<svg class="a" style="left:610.0px;top:768.8px" width="428.8" height="77.9" viewBox="610.0 768.8 428.8 77.9"><polygon points="627.9,788.5 621.5,784.8 621.5,777.4 627.9,773.7 634.3,777.4 634.3,784.8" fill="#7fc2f6"/><rect x="624.7" y="778.1" width="6.4" height="6" rx=".8" fill="#7ab9ee" stroke="#e6f3fd" stroke-width=".9"/><path d="M626.3 780.2 h3.2 M626.3 782.1 h3.2" stroke="#eaf5fd" stroke-width=".7"/><path d="M610.0 794.4 h428.8" stroke="#eeeeee" stroke-width="1"/><polygon points="627.9,814.1 621.5,810.4 621.5,803.0 627.9,799.3 634.3,803.0 634.3,810.4" fill="#7fc2f6"/><rect x="624.7" y="803.7" width="6.4" height="6" rx=".8" fill="#7ab9ee" stroke="#e6f3fd" stroke-width=".9"/><path d="M626.3 805.8 h3.2 M626.3 807.7 h3.2" stroke="#eaf5fd" stroke-width=".7"/><path d="M610.0 820.1 h428.8" stroke="#eeeeee" stroke-width="1"/><polygon points="627.9,839.8 621.5,836.1 621.5,828.7 627.9,825.0 634.3,828.7 634.3,836.1" fill="#7fc2f6"/><rect x="624.7" y="829.4" width="6.4" height="6" rx=".8" fill="#7ab9ee" stroke="#e6f3fd" stroke-width=".9"/><path d="M626.3 831.5 h3.2 M626.3 833.4 h3.2" stroke="#eaf5fd" stroke-width=".7"/></svg>
<div class="a" style="left:640.8px;top:775.6px;height:11px;line-height:11px;font-size:8.4px;letter-spacing:-0.143px;color:#4a4a4a;">pool.supportxmr.com</div>
<div class="a" style="left:1015.5px;top:775.6px;height:11px;line-height:11px;font-size:8.5px;letter-spacing:-0.491px;color:#4a4a4a;">105</div>
<div class="a" style="left:640.8px;top:801.2px;height:11px;line-height:11px;font-size:8.4px;letter-spacing:-0.182px;color:#4a4a4a;">xlsln.c505.net</div>
<div class="a" style="left:1019.9px;top:801.2px;height:11px;line-height:11px;font-size:8.5px;letter-spacing:-0.655px;color:#4a4a4a;">31</div>
<div class="a" style="left:640.8px;top:826.9px;height:11px;line-height:11px;font-size:8.4px;letter-spacing:-0.226px;color:#4a4a4a;">ubofuabneuafaohog.biz</div>
<div class="a" style="left:1019.9px;top:826.9px;height:11px;line-height:11px;font-size:8.5px;letter-spacing:-0.655px;color:#4a4a4a;">27</div>
<div class="a" style="left:1068.1px;top:721.7px;height:12px;line-height:12px;font-size:9.3px;letter-spacing:-0.044px;color:#444;">Top Hosts</div>
<div class="a" style="left:1068.1px;top:744.4px;width:428.8px;height:50.0px;background:#fff;box-shadow:0 0 2px rgba(0,0,0,.14)"></div>
<div class="a" style="left:1068.1px;top:744.4px;width:428.8px;height:24.4px;background:#f8f8f8"></div>
<div class="a" style="left:1389.7px;top:744.4px;width:1px;height:24.4px;background:#e9e9e9"></div>
<div class="a" style="left:1077.9px;top:750.9px;height:11px;line-height:11px;font-size:8.2px;letter-spacing:-0.065px;color:#777;">Hosts</div>
<div class="a" style="left:1457.5px;top:750.9px;height:11px;line-height:11px;font-size:8.2px;letter-spacing:-0.372px;color:#777;"># Events</div>
<svg class="a" style="left:1068.1px;top:768.8px" width="428.8" height="26.6" viewBox="1068.1 768.8 428.8 26.6"><polygon points="1086.0,788.5 1079.6,784.8 1079.6,777.4 1086.0,773.7 1092.4,777.4 1092.4,784.8" fill="#7fc2f6"/><rect x="1082.8" y="778.1" width="6.4" height="6" rx=".8" fill="#7ab9ee" stroke="#e6f3fd" stroke-width=".9"/><path d="M1084.4 780.2 h3.2 M1084.4 782.1 h3.2" stroke="#eaf5fd" stroke-width=".7"/></svg>
<div class="a" style="left:1098.9px;top:775.6px;height:11px;line-height:11px;font-size:8.4px;letter-spacing:-0.261px;color:#4a4a4a;">192.168.30.100</div>
<div class="a" style="left:1478.0px;top:775.6px;height:11px;line-height:11px;font-size:8.5px;letter-spacing:-0.655px;color:#4a4a4a;">36</div>

</div>
<!-- scrollbar -->
<div class="a" style="left:1526px;top:0;width:10px;height:848px;background:#f1f1f1"></div>
<div class="a" style="left:1527px;top:0;width:9px;height:704px;background:#c0c0c0"></div>
<div class="a" style="left:0;top:846px;width:242px;height:2px;background:#3c3c3c"></div>
</body>
</html>
